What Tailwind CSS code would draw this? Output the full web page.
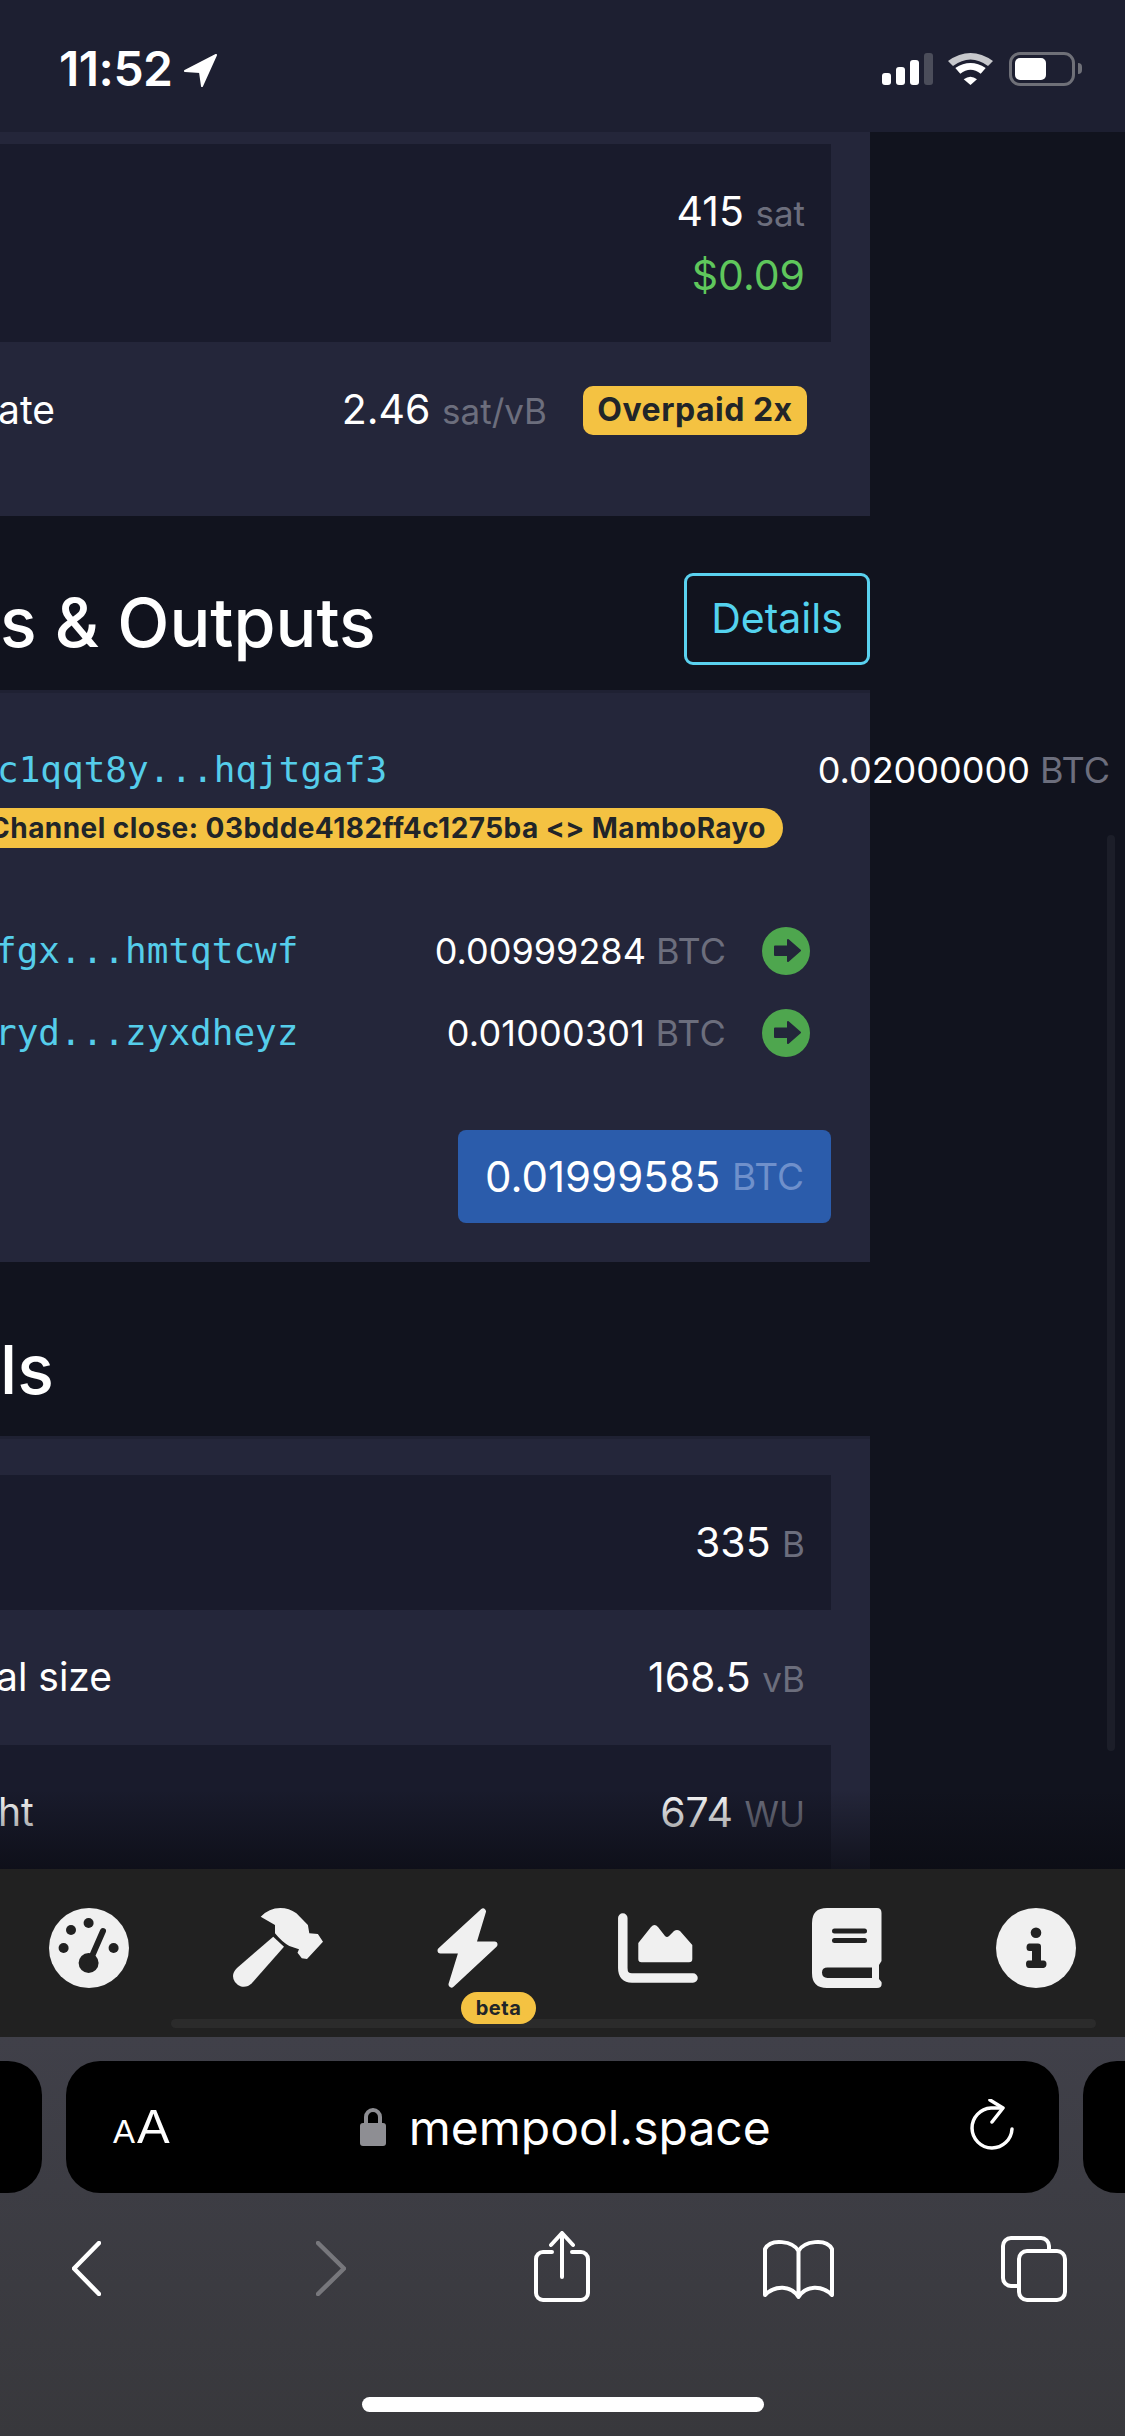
<!DOCTYPE html>
<html lang="en">
<head>
    <meta charset="UTF-8">
    <meta name="viewport" content="width=device-width, initial-scale=1.0">
    <script src="https://cdn.jsdelivr.net/npm/@tailwindcss/browser@4"></script>
    <title>mempool.space</title>
</head>
<body class="bg-[#11131e]">
<div class="relative w-[1125px] h-[2436px] overflow-hidden flex flex-col bg-[#11131e] text-white font-[Inter,sans-serif]">

    <!-- status bar -->
    <div class="h-[132px] shrink-0 bg-[#1d1f31] flex items-start relative">
        <span class="ml-[59px] mt-[42px] text-[48px] leading-[54px] font-semibold tracking-[-0.5px] w-[111px]">11:52</span>
        <svg class="ml-[13px] mt-[53px]" width="35" height="35" viewBox="0 0 35 35"><path d="M33 2 2 18l15 1 2 14z" fill="#fff" stroke="#fff" stroke-width="2" stroke-linejoin="round"/></svg>
        <div class="ml-auto flex items-end h-[32px] mt-[53px] gap-[5px]">
            <div class="w-[9px] h-[12px] rounded-[3px] bg-white"></div>
            <div class="w-[9px] h-[18px] rounded-[3px] bg-white"></div>
            <div class="w-[9px] h-[25px] rounded-[3px] bg-white"></div>
            <div class="w-[9px] h-[32px] rounded-[3px] bg-[#4b4d5a]"></div>
        </div>
        <svg class="ml-[15px] mt-[53px]" width="45" height="32" viewBox="0 0 45 32">
            <path d="M0 8Q22.5-8 45 8l-5 5Q22.500 0 5 13z" fill="#c7c8cc"/>
            <path d="M7.300 15Q22.500 5 37.700 15l-5 5.700Q22.500 13 12.300 20.700z" fill="#fff"/>
            <path d="M15.700 26.300Q22.500 21 29 26.300L22.500 32z" fill="#fff"/>
        </svg>
        <div class="ml-[16px] mt-[52px] w-[66px] h-[34px] rounded-[11px] border-[3px] border-[#6f7078] p-[3px]">
            <div class="w-[31px] h-[22px] rounded-[5px] bg-white"></div>
        </div>
        <div class="ml-[3px] mt-[63px] w-[4px] h-[11px] rounded-r-full bg-[#6f7078] mr-[43px]"></div>
    </div>

    <!-- page content, scrolled sideways -->
    <div class="h-[1737px] shrink-0 overflow-hidden">
        <div class="w-[870px] h-[384px] bg-[#24263a] pt-[12px]">
            <div class="h-[198px] w-[831px] bg-[#191b2c] pr-[26px] flex flex-col items-end pt-[36px]">
                <div class="text-[41px] leading-[62px]">415 <span class="text-[#6c6e7d] text-[35px]">sat</span></div>
                <div class="text-[41px] leading-[62px] text-[#5fc75c]">$0.09</div>
            </div>
            <div class="h-[174px] w-[831px] pr-[24px] pb-[38px] flex items-center text-[39px]">
                <span class="-ml-[2px]">ate</span>
                <span class="ml-auto text-[41px]">2.46 <span class="text-[#6c6e7d] text-[35px]">sat/vB</span></span>
                <span class="ml-[36px] h-[49px] w-[224px] rounded-[10px] bg-[#f4c242] text-[#212529] text-[32px] tracking-[0.5px] font-bold flex items-center justify-center">Overpaid 2x</span>
            </div>
        </div>

        <div class="w-[870px] h-[174px] flex items-start justify-between relative">
            <h2 class="mt-[66px] text-[68px] leading-[80px] font-medium">s &amp; Outputs</h2>
            <div class="mt-[57px] w-[186px] h-[92px] rounded-[9px] border-[3px] border-[#5ad1ef] text-[#54d2ee] text-[41px] flex items-center justify-center">Details</div>
        </div>

        <div class="w-[870px] h-[572px] bg-[#24263a] border-t-[3px] border-[#1f2133]">
            <div class="w-[1110px] h-[104px] flex items-end justify-between pb-[2px]">
                <span class="-ml-[3px] font-['DejaVu_Sans_Mono',monospace] text-[36px] leading-[50px] text-[#55cdea]">c1qqt8y...hqjtgaf3</span>
                <span class="text-[36px] leading-[50px]">0.02000000 <span class="text-[#6c6e7d]">BTC</span></span>
            </div>
            <div class="w-[783px] h-[40px] mt-[11px] rounded-r-[20px] bg-[#f4c242] text-[#212529] text-[28px] tracking-[0.45px] font-bold flex items-center justify-end pr-[17px] whitespace-nowrap">Channel close: 03bdde4182ff4c1275ba &lt;&gt; MamboRayo</div>
            <div class="w-[810px] h-[82px] mt-[62px] flex items-center">
                <span class="-ml-[5px] font-['DejaVu_Sans_Mono',monospace] text-[36px] text-[#55cdea]">fgx...hmtqtcwf</span>
                <span class="ml-auto text-[36px]">0.00999284 <span class="text-[#6c6e7d]">BTC</span></span>
                <svg class="ml-[36px]" width="48" height="48" viewBox="0 0 48 48"><circle cx="24" cy="24" r="24" fill="#4ea64e"/><path d="M13 19.500H26V13L38 23.500 26 34V28H13z" fill="#23263a" stroke="#23263a" stroke-width="2" stroke-linejoin="round"/></svg>
            </div>
            <div class="w-[810px] h-[82px] flex items-center">
                <span class="-ml-[5px] font-['DejaVu_Sans_Mono',monospace] text-[36px] text-[#55cdea]">ryd...zyxdheyz</span>
                <span class="ml-auto text-[36px] tracking-[0.2px]">0.01000301 <span class="text-[#6c6e7d]">BTC</span></span>
                <svg class="ml-[36px]" width="48" height="48" viewBox="0 0 48 48"><circle cx="24" cy="24" r="24" fill="#4ea64e"/><path d="M13 19.500H26V13L38 23.500 26 34V28H13z" fill="#23263a" stroke="#23263a" stroke-width="2" stroke-linejoin="round"/></svg>
            </div>
            <div class="w-[831px] mt-[56px] flex justify-end">
                <div class="w-[373px] h-[93px] rounded-[8px] bg-[#2b5cab] text-[42px] flex items-center justify-center">0.01999585&nbsp;<span class="text-[#6f90cb] text-[37px]">BTC</span></div>
            </div>
        </div>

        <div class="w-[870px] h-[174px]">
            <h2 class="pt-[67px] text-[68px] leading-[80px] font-medium">ls</h2>
        </div>

        <div class="w-[870px] h-[600px] bg-[#24263a] border-t-[3px] border-[#1f2133] pt-[36px]">
            <div class="h-[135px] w-[831px] bg-[#191b2c] pr-[26px] flex items-center justify-end text-[41px]">
                <span>335 <span class="text-[#6c6e7d] text-[35px]">B</span></span>
            </div>
            <div class="h-[135px] w-[831px] pr-[26px] flex items-center justify-between text-[41px]">
                <span class="-ml-[4px] text-[39px]">al size</span>
                <span>168.5 <span class="text-[#6c6e7d] text-[35px]">vB</span></span>
            </div>
            <div class="h-[135px] w-[831px] bg-[#191b2c] pr-[26px] flex items-center justify-between text-[41px]">
                <span class="-ml-[2px] text-[39px]">ht</span>
                <span>674 <span class="text-[#6c6e7d] text-[35px]">WU</span></span>
            </div>
        </div>
    </div>

    <!-- scrollbar and fade over the page -->
    <div class="absolute left-[1107px] top-[835px] w-[8px] h-[916px] rounded-full bg-[#1c1e29]"></div>
    <div class="absolute left-0 top-[1790px] w-full h-[79px] bg-linear-to-b from-transparent to-[#0a0b12]/70"></div>

    <!-- mempool bottom nav -->
    <div class="relative h-[168px] shrink-0 bg-[#212121] pt-[39px] overflow-hidden">
        <div class="grid grid-cols-6 w-[1137px] -ml-[6px]">
            <div class="flex justify-center">
                <svg width="80" height="80" viewBox="0 0 80 80"><circle cx="40" cy="40" r="40" fill="#f0f0f0"/><g fill="#212121"><circle cx="39.600" cy="15" r="5"/><circle cx="22" cy="22" r="5"/><circle cx="14.600" cy="40" r="5"/><circle cx="64.600" cy="40" r="5"/><circle cx="39.600" cy="55" r="10"/></g><path d="M54 23 40 55" stroke="#212121" stroke-width="6" stroke-linecap="round"/></svg>
            </div>
            <div class="flex justify-center">
                <svg width="90" height="80" viewBox="0 0 90 80" fill="#f0f0f0"><path d="M27.700 8.700Q36 0 47.400 0 56 0 63.400 5.300L74.900 17 76.300 25.300 84.900 26 90 33.700 74 51 68.800 50.300 64.500 44.700 66 41.300 56.300 38Q49 34 42 25.300V17z"/><path d="M40.200 28.700 51 38.700 18.800 75.300Q14 80 8 78.500 0 75 0 68 0 64 4 60z"/></svg>
            </div>
            <div class="flex justify-center">
                <svg width="62" height="80" viewBox="0 0 62 80" fill="#f0f0f0" stroke="#f0f0f0" stroke-width="6" stroke-linejoin="round"><path d="M46 3.500 36 36.500H57.500L14.500 76.500 25 42.500H3.500z"/></svg>
            </div>
            <div class="flex justify-center">
                <svg class="mt-[5px] ml-[2px]" width="80" height="70" viewBox="0 0 80 70"><path d="M4.800 5V55Q4.800 65 14 65H75" fill="none" stroke="#f0f0f0" stroke-width="9.500" stroke-linecap="round"/><path d="M20.300 30 33 14Q36.500 10 40 14L47 23Q49 25 51 23L56 18Q59 16 62 18L74.300 32V46Q74.300 49.300 71 49.300H23.500Q20.300 49.300 20.300 46z" fill="#f0f0f0"/></svg>
            </div>
            <div class="flex justify-center">
                <svg width="70" height="80" viewBox="0 0 70 80"><path d="M15 0H65Q69.500 0 69.500 5V53L67 57V71L69.500 74Q70.500 80 65 80H15Q0 80 0 65V15Q0 0 15 0z" fill="#f0f0f0"/><rect x="20" y="20.500" width="35" height="5" rx="2.500" fill="#212121"/><rect x="20" y="30" width="35" height="5" rx="2.500" fill="#212121"/><path d="M60 59.500H15.500Q10 59.500 10 64.500T15.500 70H60z" fill="#212121"/></svg>
            </div>
            <div class="flex justify-center">
                <svg width="80" height="80" viewBox="0 0 80 80"><circle cx="40" cy="40" r="40" fill="#f0f0f0"/><g fill="#212121"><circle cx="40" cy="24.700" r="5.300"/><path d="M33 35.500H42Q45 35.500 45 38.500V52.500H47.500Q50.500 52.500 50.500 56T47.500 60H33Q30 60 30 56T33 52.500H36V43H33.500Q30.500 43 30.500 39.500T33 35.500z"/></g></svg>
            </div>
        </div>
        <div class="absolute left-[171px] top-[150px] w-[925px] h-[9px] rounded-full bg-[#2b2b2b]"></div>
        <div class="absolute left-[461px] top-[123px] w-[75px] h-[32px] rounded-full bg-[#f4c242] text-[#212529] text-[20px] font-bold tracking-[0.5px] flex items-center justify-center">beta</div>
    </div>

    <!-- safari toolbar -->
    <div class="flex-1 bg-linear-to-b from-[#404049] to-[#38383c] pt-[24px] flex flex-col">
        <div class="flex h-[132px] gap-[24px]">
            <div class="w-[42px] rounded-r-[34px] bg-black"></div>
            <div class="w-[993px] rounded-[34px] bg-black flex items-start">
                <div class="ml-[47px] mt-[40px] flex items-baseline font-[Liberation_Sans,sans-serif]">
                    <span class="text-[33px] leading-[50px]">A</span><span class="text-[49px] leading-[50px] ml-[2px]">A</span>
                </div>
                <svg class="ml-[190px] mt-[47px]" width="26" height="38" viewBox="0 0 26 38"><rect y="15" width="26" height="23" rx="3" fill="#8e8e93"/><path d="M6 16V9a7 7 0 0 1 14 0V16" fill="none" stroke="#8e8e93" stroke-width="4"/></svg>
                <span class="ml-[23px] mt-[37px] text-[48px] leading-[60px]">mempool.space</span>
                <svg class="ml-auto mr-[44px] mt-[38px]" width="46" height="54" viewBox="0 0 46 54" fill="none" stroke="#fff" stroke-width="3.500" stroke-linecap="round" stroke-linejoin="round"><path d="M33 9H22A20 20 0 1 0 43 30"/><path d="M21 1 34 9 23 23"/></svg>
            </div>
            <div class="flex-1 rounded-l-[34px] bg-black"></div>
        </div>
        <div class="flex items-start pl-[72px] mt-[38px] h-[71px]">
            <svg class="mt-[10px]" width="29" height="55" viewBox="0 0 29 55" fill="none" stroke="#fff" stroke-width="4.500" stroke-linecap="round" stroke-linejoin="round"><path d="M27 2 2 27.500 27 53"/></svg>
            <svg class="ml-[215px] mt-[10px]" width="30" height="55" viewBox="0 0 30 55" fill="none" stroke="#77777c" stroke-width="4.500" stroke-linecap="round" stroke-linejoin="round"><path d="M2 2 28 27.500 2 53"/></svg>
            <svg class="ml-[188px]" width="56" height="71" viewBox="0 0 56 71" fill="none" stroke="#fff" stroke-width="4" stroke-linecap="round" stroke-linejoin="round"><path d="M18 21H9a7 7 0 0 0-7 7V62a7 7 0 0 0 7 7H47a7 7 0 0 0 7-7V28a7 7 0 0 0-7-7H38"/><path d="M28 46V3M17 14 28 2 39 14"/></svg>
            <svg class="ml-[173px] mt-[8px]" width="71" height="60" viewBox="0 0 71 60" fill="none" stroke="#fff" stroke-width="4" stroke-linejoin="round"><path d="M35.500 12C30 2 8-1 2 10V56C12 46 28 46 35.500 58 43 46 59 46 69 56V10C63-1 41 2 35.500 12V58"/></svg>
            <svg class="ml-[167px] mt-[5px]" width="66" height="66" viewBox="0 0 66 66" fill="none" stroke="#fff" stroke-width="4"><path d="M16 50H10a8 8 0 0 1-8-8V10a8 8 0 0 1 8-8H40a8 8 0 0 1 8 8V14"/><rect x="18" y="15" width="46" height="49" rx="8"/></svg>
        </div>
        <div class="mt-[95px] mx-auto w-[402px] h-[15px] rounded-full bg-white"></div>
    </div>
</div>
</body>
</html>
